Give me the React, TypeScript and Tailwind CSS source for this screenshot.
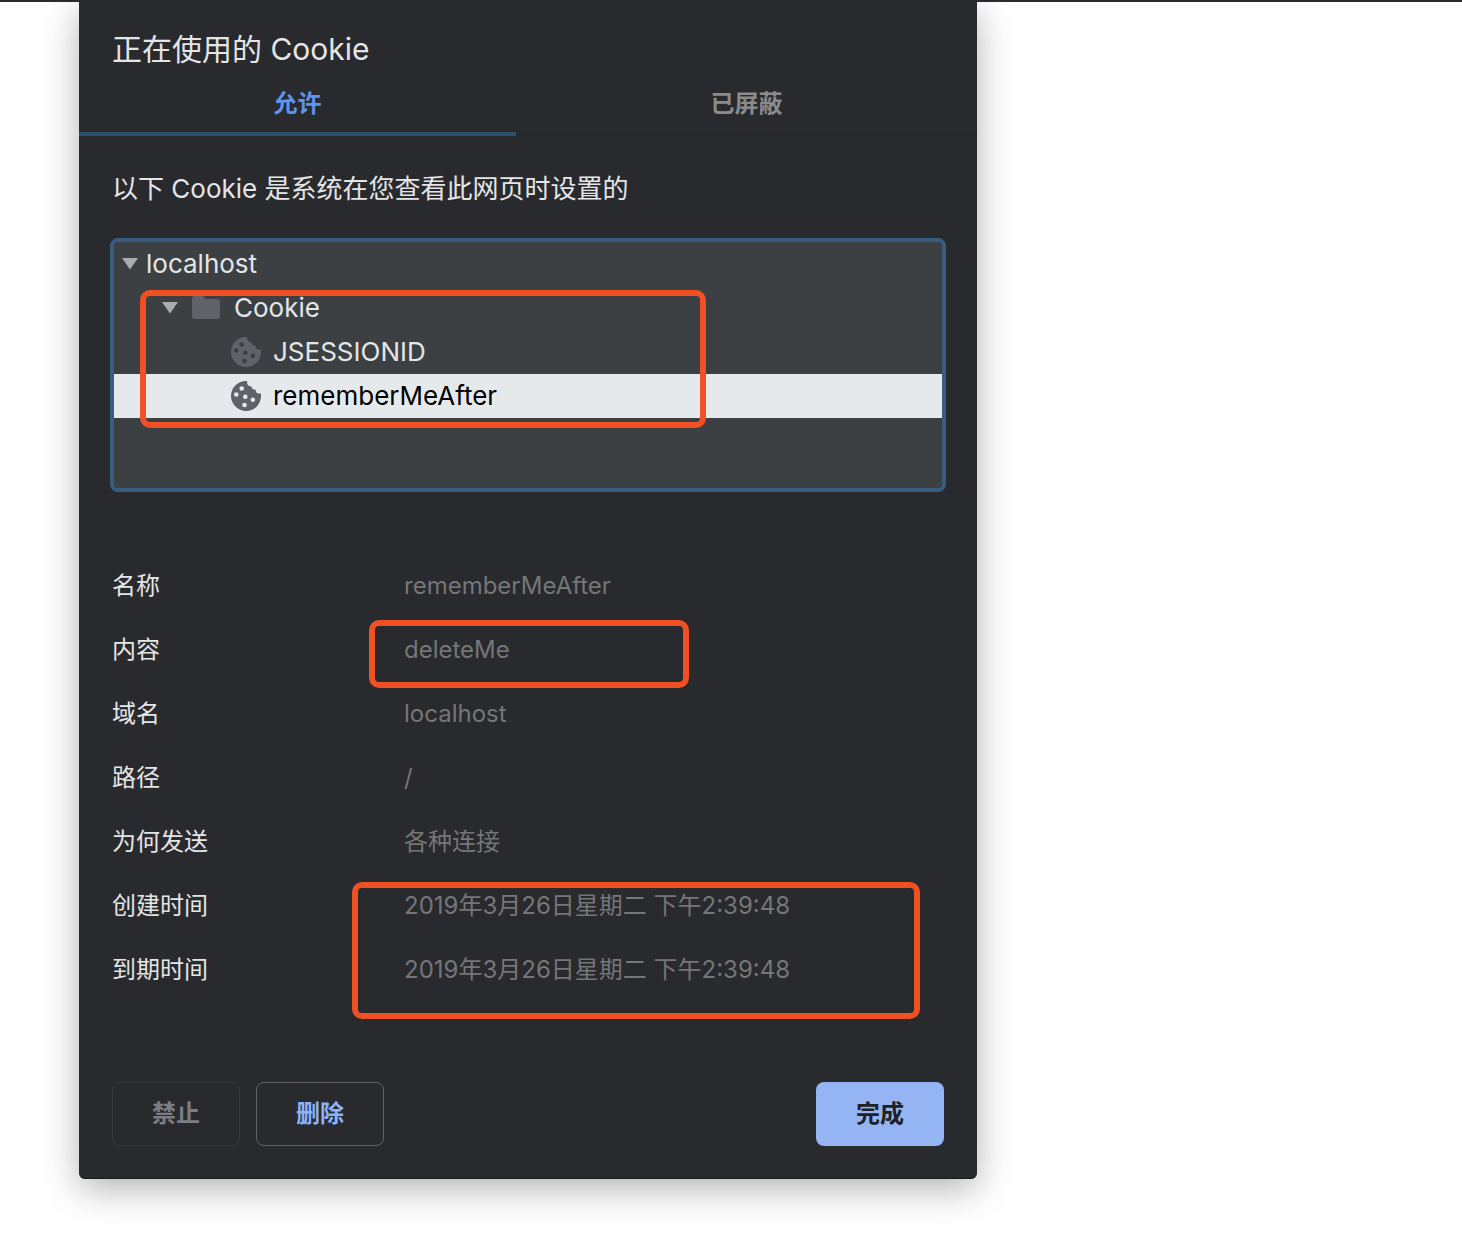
import { useState } from "react";
import clsx from "clsx";

const details = [
  { label: "名称", value: "rememberMeAfter" },
  { label: "内容", value: "deleteMe" },
  { label: "域名", value: "localhost" },
  { label: "路径", value: "/" },
  { label: "为何发送", value: "各种连接" },
  { label: "创建时间", value: "2019年3月26日星期二 下午2:39:48" },
  { label: "到期时间", value: "2019年3月26日星期二 下午2:39:48" },
];

const cookies = ["JSESSIONID", "rememberMeAfter"];

function Triangle() {
  return (
    <svg width="16" height="12" viewBox="0 0 16 12" fill="#a9abad">
      <path d="M0 0h16L8 11.5z" />
    </svg>
  );
}

function FolderIcon() {
  return (
    <svg width="28" height="24" viewBox="0 0 28 24" fill="#5f6368">
      <path d="M2.5 0h8.2l3 3h11.8A2.5 2.5 0 0 1 28 5.500v15A2.500 2.500 0 0 1 25.500 23h-23A2.500 2.500 0 0 1 0 20.500v-18A2.500 2.500 0 0 1 2.500 0z" />
    </svg>
  );
}

function CookieIcon() {
  return (
    <svg width="30" height="30" viewBox="0 0 30 30" fill="#5f6368">
      <path
        fillRule="evenodd"
        d="M16 0A15 15 0 1 0 30 15.300L30 12.400Q27 13 25.200 11.500Q24.700 10.800 24.700 8.600Q22.500 8.800 21.500 7.800Q20.600 7 20.400 5.200Q18.300 5.500 17.200 4.200Q16 3 16 0ZM10.700 5.200a2.300 2.300 0 1 1 0 4.600a2.300 2.300 0 1 1 0-4.600ZM5.300 11.200a2.300 2.300 0 1 1 0 4.600a2.300 2.300 0 1 1 0-4.600ZM14.300 13.500a2.300 2.300 0 1 1 0 4.600a2.300 2.300 0 1 1 0-4.600ZM21.800 16.500a2.300 2.300 0 1 1 0 4.600a2.300 2.300 0 1 1 0-4.600ZM13.500 21.700a2.300 2.300 0 1 1 0 4.600a2.300 2.300 0 1 1 0-4.600Z"
      />
    </svg>
  );
}

function Highlight({ className }: { className: string }) {
  return (
    <div
      className={clsx(
        "pointer-events-none absolute rounded-[10px] border-6 border-[#f05023]",
        className
      )}
    />
  );
}

function CookieTree() {
  const [selected, setSelected] = useState("rememberMeAfter");

  return (
    <div className="relative mx-[31px] mt-7 min-h-[254px] rounded-lg border-4 border-[#375d80] bg-[#3c4043] text-[26px] leading-11">
      <button type="button" className="flex h-11 w-full items-center gap-2 pl-2 text-left">
        <Triangle />
        localhost
      </button>
      <button type="button" className="flex h-11 w-full items-center pl-12 text-left">
        <Triangle />
        <span className="mr-3.5 ml-3.5">
          <FolderIcon />
        </span>
        Cookie
      </button>
      <ul>
        {cookies.map((name) => (
          <li key={name}>
            <button
              type="button"
              onClick={() => setSelected(name)}
              className={clsx(
                "flex h-11 w-full items-center gap-3 pl-[117px] text-left",
                selected === name && "bg-[#e6e9ec] text-black"
              )}
            >
              <CookieIcon />
              {name}
            </button>
          </li>
        ))}
      </ul>
      <Highlight className="top-12 left-[26px] h-[138px] w-[566px]" />
    </div>
  );
}

export default function App() {
  const [tab, setTab] = useState("allowed");

  return (
    <div className="min-h-screen border-t-2 border-[#2b2c2f] bg-white pb-[71px] pl-[79px] font-['Inter','Noto_Sans_CJK_SC',sans-serif]">
      <main className="max-w-[898px] rounded-b-md border-b border-[#1c1c1e] bg-[#292a2d] pb-8 text-[#e4e5e7] shadow-[0_10px_36px_rgba(0,0,0,0.3)]">
        <h1 className="px-[33px] pt-6 pb-0.5 text-[30px] leading-[46px]">正在使用的 Cookie</h1>
        <div className="flex border-b border-[#252629] text-2xl font-bold" role="tablist">
          <button
            type="button"
            role="tab"
            aria-selected={tab === "allowed"}
            onClick={() => setTab("allowed")}
            className={clsx(
              "-mb-px h-[62px] w-[437px] border-b-4 pt-0.5",
              tab === "allowed"
                ? "border-[#2d506b] text-[#5f93f0]"
                : "border-transparent text-[#8a8b8c]"
            )}
          >
            允许
          </button>
          <button
            type="button"
            role="tab"
            aria-selected={tab === "blocked"}
            onClick={() => setTab("blocked")}
            className={clsx(
              "-mb-px h-[62px] flex-1 border-b-4 pt-0.5",
              tab === "blocked"
                ? "border-[#2d506b] text-[#5f93f0]"
                : "border-transparent text-[#8a8b8c]"
            )}
          >
            已屏蔽
          </button>
        </div>

        <p className="mt-8 px-[33px] text-[26px] leading-[42px]">
          以下 Cookie 是系统在您查看此网页时设置的
        </p>

        <CookieTree />

        <dl className="relative mt-[62px] px-[33px] text-2xl leading-16">
          {details.map(({ label, value }) => (
            <div key={label} className="flex">
              <dt className="w-[292px]">{label}</dt>
              <dd className="text-[#757677]">{value}</dd>
            </div>
          ))}
          <Highlight className="top-[66px] left-[290px] h-[68px] w-80" />
          <Highlight className="top-82 left-[273px] h-[137px] w-[568px]" />
        </dl>

        <div className="mt-20 flex gap-4 px-[33px] text-2xl font-bold">
          <button
            type="button"
            disabled
            className="h-16 w-32 rounded-lg border border-[#37383b] text-[#7b7f84]"
          >
            禁止
          </button>
          <button
            type="button"
            className="h-16 w-32 rounded-lg border border-[#5f6368] text-[#8ab4f8]"
          >
            删除
          </button>
          <button
            type="button"
            className="ml-auto h-16 w-32 rounded-lg bg-[#94b4f4] text-[#202124]"
          >
            完成
          </button>
        </div>
      </main>
    </div>
  );
}
